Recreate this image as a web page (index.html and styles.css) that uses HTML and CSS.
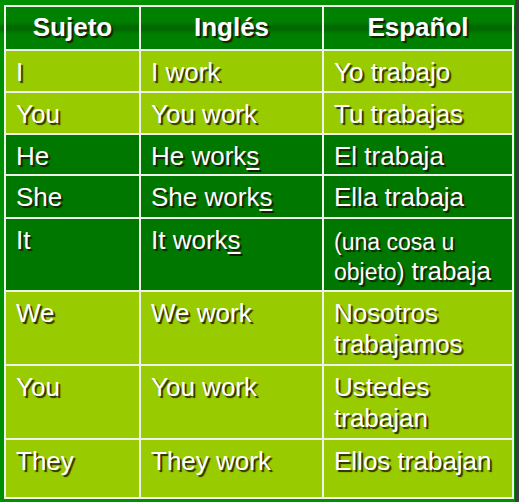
FILE: index.html
```html
<!DOCTYPE html>
<html lang="es">
<head>
<meta charset="utf-8">
<title>Sujeto Inglés Español</title>
<link rel="stylesheet" href="styles.css">
</head>
<body>
<div class="page">
  <div class="slide">
    <div class="grid">
      <div class="cell head">Sujeto</div>
      <div class="cell head">Inglés</div>
      <div class="cell head">Español</div>

      <div class="cell light">I</div>
      <div class="cell light">I work</div>
      <div class="cell light">Yo trabajo</div>

      <div class="cell light">You</div>
      <div class="cell light">You work</div>
      <div class="cell light">Tu trabajas</div>

      <div class="cell dark">He</div>
      <div class="cell dark">He work<u>s</u></div>
      <div class="cell dark">El trabaja</div>

      <div class="cell dark">She</div>
      <div class="cell dark">She work<u>s</u></div>
      <div class="cell dark">Ella trabaja</div>

      <div class="cell dark">It</div>
      <div class="cell dark">It work<u>s</u></div>
      <div class="cell dark mixed"><span class="small">(una cosa u</span> <span class="small">objeto)</span> trabaja</div>

      <div class="cell light">We</div>
      <div class="cell light">We work</div>
      <div class="cell light">Nosotros trabajamos</div>

      <div class="cell light">You</div>
      <div class="cell light">You work</div>
      <div class="cell light">Ustedes trabajan</div>

      <div class="cell light">They</div>
      <div class="cell light">They work</div>
      <div class="cell light">Ellos trabajan</div>
    </div>
  </div>
  <div class="edge"></div>
</div>
</body>
</html>
```

FILE: styles.css
```css
html, body {
  margin: 0;
  padding: 0;
}

body {
  width: 519px;
  height: 502px;
  overflow: hidden;
  background: #008f00;
  font-family: "Liberation Sans", Arial, sans-serif;
}

.page {
  display: flex;
  height: 502px;
}

.slide {
  width: 515px;
  height: 502px;
  overflow: hidden;
  padding: 5px 0 0 4px;
  box-sizing: border-box;
  background: linear-gradient(to bottom,
    #008f00 0, #008f00 23px,
    #006f00 27px, #006f00 30px,
    #008f00 34px, #008f00 100%);
}

.edge {
  width: 4px;
  height: 502px;
  background: #3b3b3b;
}

.grid {
  display: grid;
  grid-template-columns: 133px 181px 188px;
  grid-template-rows: 42px 40px 40px 39px 41px 71px 72px 72px 57px;
  gap: 2px;
  padding: 2px;
  width: max-content;
  background: #eef2ea;
}

.cell {
  color: #ffffff;
  font-size: 26px;
  line-height: 31px;
  padding: 6px 8px 0 10px;
  text-shadow: 2px 2px 1px rgba(25, 15, 0, 0.85);
  box-sizing: border-box;
}

.head {
  font-weight: bold;
  text-align: center;
  padding: 5px 4px 0;
  background: linear-gradient(to bottom,
    #008000 0, #008000 15px,
    #006a00 19px, #006a00 23px,
    #008000 27px, #008000 100%);
}

.light {
  background: #99cc00;
}

.dark {
  background: #007800;
}

.mixed {
  line-height: 30px;
  padding-top: 7px;
}

.small {
  font-size: 23px;
  line-height: 26px;
}

u {
  text-decoration-thickness: 2px;
  text-underline-offset: 3px;
}
```
